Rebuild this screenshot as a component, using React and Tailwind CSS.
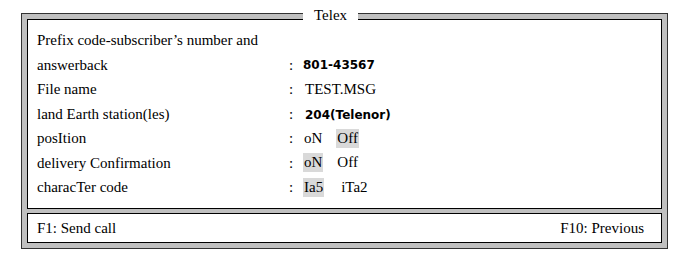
import React from 'react'

const serif = { fontFamily: '"Liberation Serif", "Times New Roman", serif' }

const Opt = ({ label, active }) => (
  <span className={`inline-block h-[19px] px-[1px] leading-[19px] ${active ? 'bg-[#d9d9d9]' : ''}`}>
    {label}
  </span>
)

const Row = ({ label, colon = true, children }) => (
  <div className="flex h-[24.5px] items-center">
    <div className="w-[252px] shrink-0">{label}</div>
    <div className="w-[14px] shrink-0">{colon ? ':' : ''}</div>
    <div className="flex items-center">{children}</div>
  </div>
)

const Bold = ({ children }) => (
  <span className="text-[12px] font-bold" style={{ fontFamily: '"DejaVu Sans", Verdana, sans-serif' }}>
    {children}
  </span>
)

export default function App() {
  return (
    <div className="h-[258px] w-[677px] bg-white pl-[21px] pt-[13px] text-[15px] text-black" style={serif}>
      <div className="relative w-[647px] border border-[#333] bg-[#c0c0c0] p-[5px]">
        <div className="absolute left-[281px] top-[-6px] flex h-[14px] w-[55px] items-center justify-center bg-white leading-none">
          Telex
        </div>
        <div className="h-[190px] border border-black bg-white pl-[9px] pt-[8px]">
          <Row label="Prefix code-subscriber’s number and" colon={false} />
          <Row label="answerback"><Bold>801-43567</Bold></Row>
          <Row label="File name"><span className="pl-[2px]">TEST.MSG</span></Row>
          <Row label="land Earth station(les)"><span className="pl-[2px]"><Bold>204(Telenor)</Bold></span></Row>
          <Row label="posItion">
            <div className="flex gap-[13px]"><Opt label="oN" /><Opt label="Off" active /></div>
          </Row>
          <Row label="delivery Confirmation">
            <div className="flex gap-[13px]"><Opt label="oN" active /><Opt label="Off" /></div>
          </Row>
          <Row label="characTer code">
            <div className="flex gap-[16px]"><Opt label="Ia5" active /><Opt label="iTa2" /></div>
          </Row>
        </div>
        <div className="mt-[4px] flex h-[30px] items-center justify-between border border-black bg-white pl-[9px] pr-[17px]">
          <span>F1: Send call</span>
          <span>F10: Previous</span>
        </div>
      </div>
    </div>
  )
}
